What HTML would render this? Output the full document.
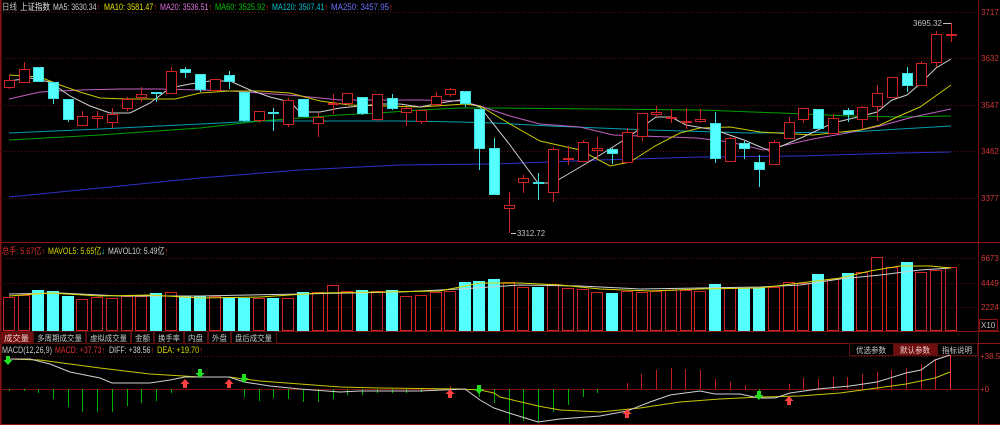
<!DOCTYPE html>
<html><head><meta charset="utf-8"><style>
html,body{margin:0;padding:0;background:#000;width:1000px;height:425px;overflow:hidden}
svg{display:block;font-family:"Liberation Sans","Noto Sans CJK SC",sans-serif;font-size:9px}
</style></head><body>
<svg width="1000" height="425" viewBox="0 0 1000 425" xmlns="http://www.w3.org/2000/svg">
<rect width="1000" height="425" fill="#000"/>
<g stroke="#6e1010" stroke-width="1" fill="none">
<line x1="0.5" y1="0" x2="0.5" y2="425" stroke="#8a1414" stroke-width="2"/>
<line x1="978.5" y1="0" x2="978.5" y2="425"/>
<line x1="0" y1="242.5" x2="1000" y2="242.5" stroke="#8a1414"/>
<line x1="0" y1="331.5" x2="1000" y2="331.5" stroke="#8a1414"/>
<line x1="0" y1="343.5" x2="1000" y2="343.5" stroke="#8a1414"/>
<line x1="0" y1="424.5" x2="1000" y2="424.5" stroke="#8a1414"/>
<line x1="0" y1="389.5" x2="978" y2="389.5" stroke="#7a1010"/>
</g>
<g stroke="#5a1010" stroke-dasharray="1,2" stroke-width="1">
<line x1="0" y1="12.5" x2="978" y2="12.5"/>
<line x1="0" y1="58.5" x2="978" y2="58.5"/>
<line x1="0" y1="105.5" x2="978" y2="105.5"/>
<line x1="0" y1="151.5" x2="978" y2="151.5"/>
<line x1="0" y1="198.5" x2="978" y2="198.5"/>
<line x1="0" y1="258.5" x2="978" y2="258.5"/>
<line x1="0" y1="283.5" x2="978" y2="283.5"/>
<line x1="0" y1="307.5" x2="978" y2="307.5"/>
<line x1="0" y1="356.5" x2="978" y2="356.5"/>
</g>
<!-- header -->
<g lengthAdjust="spacingAndGlyphs">
<text x="2" y="10" fill="#c0c0c0" textLength="15" lengthAdjust="spacingAndGlyphs">日线</text>
<text x="20" y="10" fill="#e0e0e0" textLength="30" lengthAdjust="spacingAndGlyphs">上证指数</text>
<text x="53" y="10" fill="#d0d0d0" textLength="47" lengthAdjust="spacingAndGlyphs">MA5: 3630.34<tspan fill="#e02020">↑</tspan></text>
<text x="104" y="10" fill="#e0e000" textLength="53" lengthAdjust="spacingAndGlyphs">MA10: 3581.47<tspan fill="#e02020">↑</tspan></text>
<text x="160" y="10" fill="#e070e0" textLength="52" lengthAdjust="spacingAndGlyphs">MA20: 3536.51<tspan fill="#e02020">↑</tspan></text>
<text x="215" y="10" fill="#00c000" textLength="54" lengthAdjust="spacingAndGlyphs">MA60: 3525.92<tspan fill="#e02020">↑</tspan></text>
<text x="272" y="10" fill="#00c0d0" textLength="56" lengthAdjust="spacingAndGlyphs">MA120: 3507.41<tspan fill="#e02020">↑</tspan></text>
<text x="331" y="10" fill="#7070ff" textLength="62" lengthAdjust="spacingAndGlyphs">MA250: 3457.95<tspan fill="#e02020">↑</tspan></text>
</g>
<g fill="#d03838" font-size="8">
<text x="981" y="15">3717</text><text x="981" y="61">3632</text><text x="981" y="108">3547</text><text x="981" y="154">3462</text><text x="981" y="201">3377</text>
<text x="981" y="261">6673</text><text x="981" y="286">4449</text><text x="981" y="310">2224</text>
<text x="980" y="359">+38.56</text><text x="980" y="392">+0</text>
</g>
<rect x="979.5" y="319.5" width="18" height="11" fill="none" stroke="#8a1414"/>
<text x="981" y="328" fill="#c0c0c0" font-size="8">X10</text>
<g fill="none" stroke-width="1">
<polyline stroke="#3030c8" points="9,197 100,188 200,178 300,170 400,165 494,164 600,160 700,157 800,156 900,153 951,152"/>
<polyline stroke="#00a0b0" points="9,133 100,129 200,124 260,121 400,121 460,122 494,123 550,126 650,130 750,133 850,132 951,126"/>
<polyline stroke="#00a000" points="9,140 100,135 200,128 260,121 300,118 340,115 380,113 420,110 460,108 494,108 600,109 700,110 780,113 850,116 900,117 951,116"/>
<polyline stroke="#c060c0" points="9,99 40,92 80,90 120,89 160,89 200,90 230,91 260,93 300,96 340,100 420,100 460,101 480,106 510,116 540,124 580,127 613,135 697,138 730,142 763,150 813,139 847,133 880,126 913,117 951,109"/>
<polyline stroke="#c8c800" points="9,75 40,77 60,85 80,92 100,98 125,99 175,99 200,93 229,91 260,91 290,93 320,101 350,105 420,107 465,104 480,106 510,124 540,141 580,150 610,166 630,162 655,146 680,133 700,128 730,127 760,132 813,135 860,130 880,125 897,117 920,107 951,85"/>
<polyline stroke="#d0d0d0" points="9,81 30,78 50,82 70,96 90,106 110,113 130,113 150,103 170,88 190,84 210,81 230,81 250,90 270,97 290,102 300,112 320,112 340,108 380,104 400,104 420,107 440,103 460,100 480,107 510,145 538,183 553,183 570,173 597,157 627,138 656,117 671,117 686,125 715,130 744,140 770,151 803,137 833,123 862,116 877,112 892,100 907,95 921,83 936,68 951,59"/>
</g>
<g stroke-width="1" shape-rendering="crispEdges">
<g stroke="#d02424" fill="#000">
<line x1="9.5" y1="75" x2="9.5" y2="89"/><rect x="4.5" y="80.5" width="10" height="7"/>
<line x1="24.5" y1="62" x2="24.5" y2="83"/><rect x="19.5" y="69.5" width="10" height="13"/>
<line x1="82.5" y1="111" x2="82.5" y2="126"/><rect x="77.5" y="116.5" width="10" height="9"/>
<line x1="97.5" y1="111" x2="97.5" y2="128"/><rect x="92.5" y="116.5" width="10" height="2"/>
<line x1="112.5" y1="108" x2="112.5" y2="128"/><rect x="107.5" y="114.5" width="10" height="8"/>
<line x1="127.5" y1="97" x2="127.5" y2="111"/><rect x="122.5" y="99.5" width="10" height="9"/>
<line x1="141.5" y1="87" x2="141.5" y2="102"/><rect x="136.5" y="94.5" width="10" height="3"/>
<line x1="171.5" y1="67" x2="171.5" y2="94"/><rect x="166.5" y="71.5" width="10" height="22"/>
<line x1="215.5" y1="79" x2="215.5" y2="92"/><rect x="210.5" y="79.5" width="10" height="11"/>
<line x1="259.5" y1="111" x2="259.5" y2="123"/><rect x="254.5" y="111.5" width="10" height="9"/>
<line x1="288.5" y1="98" x2="288.5" y2="127"/><rect x="283.5" y="100.5" width="10" height="24"/>
<line x1="318.5" y1="113" x2="318.5" y2="137"/><rect x="313.5" y="117.5" width="10" height="6"/>
<line x1="333.5" y1="94" x2="333.5" y2="114"/><rect x="328.5" y="103.5" width="10" height="1"/>
<line x1="347.5" y1="93" x2="347.5" y2="105"/><rect x="342.5" y="93.5" width="10" height="10"/>
<line x1="377.5" y1="94" x2="377.5" y2="121"/><rect x="372.5" y="94.5" width="10" height="25"/>
<line x1="406.5" y1="107" x2="406.5" y2="126"/><rect x="401.5" y="108.5" width="10" height="4"/>
<line x1="421.5" y1="110" x2="421.5" y2="124"/><rect x="416.5" y="110.5" width="10" height="11"/>
<line x1="436.5" y1="92" x2="436.5" y2="105"/><rect x="431.5" y="96.5" width="10" height="8"/>
<line x1="450.5" y1="88" x2="450.5" y2="97"/><rect x="445.5" y="89.5" width="10" height="5"/>
<line x1="509.5" y1="192" x2="509.5" y2="233"/><rect x="504.5" y="205.5" width="10" height="3"/>
<line x1="523.5" y1="175" x2="523.5" y2="193"/><rect x="518.5" y="178.5" width="10" height="4"/>
<line x1="553.5" y1="147" x2="553.5" y2="202"/><rect x="548.5" y="149.5" width="10" height="43"/>
<line x1="568.5" y1="146" x2="568.5" y2="165"/><rect x="563.5" y="158.5" width="10" height="1"/>
<line x1="583.5" y1="140" x2="583.5" y2="162"/><rect x="578.5" y="142.5" width="10" height="19"/>
<line x1="597.5" y1="137" x2="597.5" y2="159"/><rect x="592.5" y="148.5" width="10" height="2"/>
<line x1="627.5" y1="128" x2="627.5" y2="163"/><rect x="622.5" y="132.5" width="10" height="30"/>
<line x1="642.5" y1="113" x2="642.5" y2="141"/><rect x="637.5" y="113.5" width="10" height="23"/>
<line x1="656.5" y1="106" x2="656.5" y2="117"/><rect x="651.5" y="112.5" width="10" height="2"/>
<line x1="671.5" y1="109" x2="671.5" y2="123"/><rect x="666.5" y="117.5" width="10" height="1"/>
<line x1="686.5" y1="108" x2="686.5" y2="129"/><rect x="681.5" y="121.5" width="10" height="1"/>
<line x1="700.5" y1="109" x2="700.5" y2="123"/><rect x="695.5" y="119.5" width="10" height="2"/>
<line x1="730.5" y1="137" x2="730.5" y2="162"/><rect x="725.5" y="138.5" width="10" height="23"/>
<line x1="774.5" y1="140" x2="774.5" y2="165"/><rect x="769.5" y="142.5" width="10" height="22"/>
<line x1="789.5" y1="117" x2="789.5" y2="139"/><rect x="784.5" y="122.5" width="10" height="16"/>
<line x1="803.5" y1="108" x2="803.5" y2="123"/><rect x="798.5" y="108.5" width="10" height="11"/>
<line x1="833.5" y1="114" x2="833.5" y2="133"/><rect x="828.5" y="118.5" width="10" height="15"/>
<line x1="862.5" y1="106" x2="862.5" y2="129"/><rect x="857.5" y="107.5" width="10" height="12"/>
<line x1="877.5" y1="85" x2="877.5" y2="121"/><rect x="872.5" y="93.5" width="10" height="13"/>
<line x1="892.5" y1="77" x2="892.5" y2="98"/><rect x="887.5" y="77.5" width="10" height="20"/>
<line x1="921.5" y1="61" x2="921.5" y2="85"/><rect x="916.5" y="63.5" width="10" height="22"/>
<line x1="936.5" y1="31" x2="936.5" y2="67"/><rect x="931.5" y="34.5" width="10" height="28"/>
<line x1="951.5" y1="23" x2="951.5" y2="42"/><rect x="946.5" y="34.5" width="10" height="1"/>
</g>
<g stroke="#40e0e0" fill="#54ffff">
<rect x="33.5" y="67.5" width="10" height="14"/>
<line x1="53.5" y1="82" x2="53.5" y2="104"/><rect x="48.5" y="82.5" width="10" height="16"/>
<line x1="68.5" y1="99" x2="68.5" y2="122"/><rect x="63.5" y="99.5" width="10" height="20"/>
<line x1="156.5" y1="92" x2="156.5" y2="102"/><rect x="151.5" y="92.5" width="10" height="1"/>
<line x1="185.5" y1="67" x2="185.5" y2="78"/><rect x="180.5" y="69.5" width="10" height="3"/>
<line x1="200.5" y1="74" x2="200.5" y2="92"/><rect x="195.5" y="74.5" width="10" height="15"/>
<line x1="229.5" y1="71" x2="229.5" y2="89"/><rect x="224.5" y="75.5" width="10" height="6"/>
<line x1="244.5" y1="92" x2="244.5" y2="122"/><rect x="239.5" y="92.5" width="10" height="28"/>
<line x1="273.5" y1="108" x2="273.5" y2="131"/><rect x="268.5" y="112.5" width="10" height="1"/>
<line x1="303.5" y1="99" x2="303.5" y2="117"/><rect x="298.5" y="99.5" width="10" height="17"/>
<line x1="362.5" y1="97" x2="362.5" y2="115"/><rect x="357.5" y="97.5" width="10" height="16"/>
<line x1="392.5" y1="94" x2="392.5" y2="110"/><rect x="387.5" y="98.5" width="10" height="10"/>
<line x1="465.5" y1="91" x2="465.5" y2="107"/><rect x="460.5" y="91.5" width="10" height="12"/>
<line x1="479.5" y1="109" x2="479.5" y2="170"/><rect x="474.5" y="109.5" width="10" height="39"/>
<line x1="494.5" y1="138" x2="494.5" y2="194"/><rect x="489.5" y="148.5" width="10" height="46"/>
<line x1="538.5" y1="173" x2="538.5" y2="200"/><rect x="533.5" y="182.5" width="10" height="1"/>
<line x1="612.5" y1="148" x2="612.5" y2="164"/><rect x="607.5" y="149.5" width="10" height="4"/>
<line x1="715.5" y1="112" x2="715.5" y2="163"/><rect x="710.5" y="123.5" width="10" height="35"/>
<line x1="744.5" y1="141" x2="744.5" y2="159"/><rect x="739.5" y="143.5" width="10" height="5"/>
<line x1="759.5" y1="155" x2="759.5" y2="187"/><rect x="754.5" y="162.5" width="10" height="7"/>
<line x1="818.5" y1="109" x2="818.5" y2="130"/><rect x="813.5" y="109.5" width="10" height="19"/>
<line x1="848.5" y1="108" x2="848.5" y2="122"/><rect x="843.5" y="110.5" width="10" height="4"/>
<line x1="907.5" y1="67" x2="907.5" y2="92"/><rect x="902.5" y="73.5" width="10" height="12"/>
</g>
</g>
<line x1="511" y1="233.5" x2="516" y2="233.5" stroke="#c0c0c0"/>
<text x="517" y="236" fill="#c0c0c0" font-size="8" textLength="28" lengthAdjust="spacingAndGlyphs">3312.72</text>
<text x="913" y="26" fill="#c0c0c0" font-size="8" textLength="29" lengthAdjust="spacingAndGlyphs">3695.32</text>
<line x1="943" y1="23.5" x2="951" y2="23.5" stroke="#c0c0c0"/>
<!-- volume header -->
<text x="2" y="254" fill="#e03030" textLength="43" lengthAdjust="spacingAndGlyphs">总手: 5.67亿↑</text>
<text x="48" y="254" fill="#d8d800" textLength="57" lengthAdjust="spacingAndGlyphs">MAVOL5: 5.65亿<tspan fill="#40e0e0">↓</tspan></text>
<text x="108" y="254" fill="#d0d0d0" textLength="60" lengthAdjust="spacingAndGlyphs">MAVOL10: 5.49亿<tspan fill="#e03030">↑</tspan></text>
<g shape-rendering="crispEdges">
<g stroke="#d02424" fill="none">
<rect x="3.5" y="297.5" width="11" height="33"/>
<rect x="18.5" y="295.5" width="11" height="35"/>
<rect x="76.5" y="299.5" width="11" height="31"/>
<rect x="91.5" y="297.5" width="11" height="33"/>
<rect x="106.5" y="298.5" width="11" height="32"/>
<rect x="121.5" y="296.5" width="11" height="34"/>
<rect x="135.5" y="296.5" width="11" height="34"/>
<rect x="165.5" y="292.5" width="11" height="38"/>
<rect x="209.5" y="296.5" width="11" height="34"/>
<rect x="253.5" y="298.5" width="11" height="32"/>
<rect x="282.5" y="298.5" width="11" height="32"/>
<rect x="312.5" y="292.5" width="11" height="38"/>
<rect x="327.5" y="285.5" width="11" height="45"/>
<rect x="341.5" y="291.5" width="11" height="39"/>
<rect x="371.5" y="291.5" width="11" height="39"/>
<rect x="400.5" y="296.5" width="11" height="34"/>
<rect x="415.5" y="295.5" width="11" height="35"/>
<rect x="430.5" y="292.5" width="11" height="38"/>
<rect x="444.5" y="291.5" width="11" height="39"/>
<rect x="503.5" y="282.5" width="11" height="48"/>
<rect x="517.5" y="287.5" width="11" height="43"/>
<rect x="547.5" y="284.5" width="11" height="46"/>
<rect x="562.5" y="288.5" width="11" height="42"/>
<rect x="577.5" y="289.5" width="11" height="41"/>
<rect x="591.5" y="292.5" width="11" height="38"/>
<rect x="621.5" y="291.5" width="11" height="39"/>
<rect x="636.5" y="292.5" width="11" height="38"/>
<rect x="650.5" y="291.5" width="11" height="39"/>
<rect x="665.5" y="290.5" width="11" height="40"/>
<rect x="680.5" y="290.5" width="11" height="40"/>
<rect x="694.5" y="291.5" width="11" height="39"/>
<rect x="724.5" y="288.5" width="11" height="42"/>
<rect x="768.5" y="287.5" width="11" height="43"/>
<rect x="783.5" y="282.5" width="11" height="48"/>
<rect x="797.5" y="283.5" width="11" height="47"/>
<rect x="827.5" y="279.5" width="11" height="51"/>
<rect x="856.5" y="272.5" width="11" height="58"/>
<rect x="871.5" y="257.5" width="11" height="73"/>
<rect x="886.5" y="267.5" width="11" height="63"/>
<rect x="915.5" y="272.5" width="11" height="58"/>
<rect x="930.5" y="270.5" width="11" height="60"/>
<rect x="945.5" y="267.5" width="11" height="63"/>
</g>
<g fill="#54ffff">
<rect x="32" y="290" width="12" height="41"/>
<rect x="47" y="291" width="12" height="40"/>
<rect x="62" y="296" width="12" height="35"/>
<rect x="150" y="293" width="12" height="38"/>
<rect x="179" y="296" width="12" height="35"/>
<rect x="194" y="296" width="12" height="35"/>
<rect x="223" y="298" width="12" height="33"/>
<rect x="238" y="298" width="12" height="33"/>
<rect x="267" y="298" width="12" height="33"/>
<rect x="297" y="292" width="12" height="39"/>
<rect x="356" y="290" width="12" height="41"/>
<rect x="386" y="290" width="12" height="41"/>
<rect x="459" y="282" width="12" height="49"/>
<rect x="473" y="281" width="12" height="50"/>
<rect x="488" y="279" width="12" height="52"/>
<rect x="532" y="287" width="12" height="44"/>
<rect x="606" y="293" width="12" height="38"/>
<rect x="709" y="284" width="12" height="47"/>
<rect x="738" y="288" width="12" height="43"/>
<rect x="753" y="288" width="12" height="43"/>
<rect x="812" y="274" width="12" height="57"/>
<rect x="842" y="273" width="12" height="58"/>
<rect x="901" y="262" width="12" height="69"/>
</g>
</g>
<g fill="none">
<polyline stroke="#d0d0d0" points="9,294 60,293 120,296 200,296 300,294 400,292 460,289 520,285 580,286 640,289 700,288 760,287 800,285 840,279 880,275 920,270 951,268"/>
<polyline stroke="#d8d800" points="9,296 50,293 100,296 150,295 200,298 260,297 320,293 380,292 440,291 480,283 520,283 560,285 600,289 650,291 700,289 760,288 800,283 840,278 870,271 900,266 930,266 951,268"/>
</g>
<g stroke="#5a1010" fill="#000">
<rect x="0.5" y="331.5" width="32" height="12" fill="#6e0e0e"/>
<rect x="33.5" y="331.5" width="52" height="12"/>
<rect x="86.5" y="331.5" width="44" height="12"/>
<rect x="131.5" y="331.5" width="22" height="12"/>
<rect x="154.5" y="331.5" width="29" height="12"/>
<rect x="184.5" y="331.5" width="23" height="12"/>
<rect x="208.5" y="331.5" width="22" height="12"/>
<rect x="231.5" y="331.5" width="45" height="12"/>
</g>
<g fill="#c8c8c8" font-size="8">
<text x="4" y="341" fill="#f0d0d0" textLength="25" lengthAdjust="spacingAndGlyphs">成交量</text>
<text x="37" y="341" textLength="45" lengthAdjust="spacingAndGlyphs">多周期成交量</text>
<text x="90" y="341" textLength="37" lengthAdjust="spacingAndGlyphs">虚拟成交量</text>
<text x="135" y="341" textLength="15" lengthAdjust="spacingAndGlyphs">金额</text>
<text x="158" y="341" textLength="22" lengthAdjust="spacingAndGlyphs">换手率</text>
<text x="188" y="341" textLength="15" lengthAdjust="spacingAndGlyphs">内盘</text>
<text x="212" y="341" textLength="15" lengthAdjust="spacingAndGlyphs">外盘</text>
<text x="235" y="341" textLength="37" lengthAdjust="spacingAndGlyphs">盘后成交量</text>
</g>
<text x="2" y="353" fill="#c8c8c8" textLength="50" lengthAdjust="spacingAndGlyphs">MACD(12,26,9)</text>
<text x="55" y="353" fill="#e03030" textLength="50" lengthAdjust="spacingAndGlyphs">MACD: +37.73↑</text>
<text x="109" y="353" fill="#d0d0d0" textLength="45" lengthAdjust="spacingAndGlyphs">DIFF: +38.56<tspan fill="#e03030">↑</tspan></text>
<text x="157" y="353" fill="#d8d800" textLength="46" lengthAdjust="spacingAndGlyphs">DEA: +19.70<tspan fill="#e03030">↑</tspan></text>
<g stroke="#5a1010">
<rect x="849.5" y="343.5" width="44" height="12" fill="#000"/>
<rect x="893.5" y="343.5" width="44" height="12" fill="#6e0e0e"/>
<rect x="937.5" y="343.5" width="40" height="12" fill="#000"/>
</g>
<g fill="#c8c8c8" font-size="8"><text x="856" y="353" textLength="30" lengthAdjust="spacingAndGlyphs">优选参数</text><text x="900" y="353" fill="#f0d0d0" textLength="30" lengthAdjust="spacingAndGlyphs">默认参数</text><text x="942" y="353" textLength="30" lengthAdjust="spacingAndGlyphs">指标说明</text></g>
<g stroke="#00b000" stroke-width="1">
<line x1="9.5" y1="389" x2="9.5" y2="391"/><line x1="24.5" y1="389" x2="24.5" y2="391"/><line x1="38.5" y1="389" x2="38.5" y2="393"/>
<line x1="53.5" y1="389" x2="53.5" y2="399"/><line x1="68.5" y1="389" x2="68.5" y2="407"/><line x1="82.5" y1="389" x2="82.5" y2="412"/>
<line x1="97.5" y1="389" x2="97.5" y2="412"/><line x1="112.5" y1="389" x2="112.5" y2="412"/><line x1="127.5" y1="389" x2="127.5" y2="406"/>
<line x1="141.5" y1="389" x2="141.5" y2="403"/><line x1="156.5" y1="389" x2="156.5" y2="401"/><line x1="171.5" y1="389" x2="171.5" y2="393"/>
<line x1="244.5" y1="389" x2="244.5" y2="397"/><line x1="259.5" y1="389" x2="259.5" y2="401"/><line x1="273.5" y1="389" x2="273.5" y2="398"/>
<line x1="288.5" y1="389" x2="288.5" y2="399"/><line x1="303.5" y1="389" x2="303.5" y2="402"/><line x1="318.5" y1="389" x2="318.5" y2="402"/>
<line x1="333.5" y1="389" x2="333.5" y2="399"/><line x1="347.5" y1="389" x2="347.5" y2="395"/><line x1="362.5" y1="389" x2="362.5" y2="395"/>
<line x1="377.5" y1="389" x2="377.5" y2="393"/><line x1="392.5" y1="389" x2="392.5" y2="393"/><line x1="406.5" y1="389" x2="406.5" y2="393"/>
<line x1="421.5" y1="389" x2="421.5" y2="392"/><line x1="436.5" y1="389" x2="436.5" y2="391"/>
<line x1="479.5" y1="389" x2="479.5" y2="397"/><line x1="494.5" y1="389" x2="494.5" y2="403"/><line x1="509.5" y1="389" x2="509.5" y2="423"/>
<line x1="523.5" y1="389" x2="523.5" y2="421"/><line x1="538.5" y1="389" x2="538.5" y2="422"/><line x1="553.5" y1="389" x2="553.5" y2="412"/>
<line x1="568.5" y1="389" x2="568.5" y2="405"/><line x1="583.5" y1="389" x2="583.5" y2="397"/><line x1="597.5" y1="389" x2="597.5" y2="393"/>
<line x1="759.5" y1="389" x2="759.5" y2="392"/>
</g>
<g stroke="#c02020" stroke-width="1">
<line x1="450.5" y1="389" x2="450.5" y2="386"/>
<line x1="627.5" y1="389" x2="627.5" y2="383"/><line x1="641.5" y1="389" x2="641.5" y2="374"/><line x1="656.5" y1="389" x2="656.5" y2="370"/>
<line x1="671.5" y1="389" x2="671.5" y2="368"/><line x1="685.5" y1="389" x2="685.5" y2="369"/><line x1="700.5" y1="389" x2="700.5" y2="370"/>
<line x1="715.5" y1="389" x2="715.5" y2="379"/><line x1="730.5" y1="389" x2="730.5" y2="382"/><line x1="745.5" y1="389" x2="745.5" y2="385"/>
<line x1="789.5" y1="389" x2="789.5" y2="384"/><line x1="803.5" y1="389" x2="803.5" y2="378"/><line x1="818.5" y1="389" x2="818.5" y2="379"/>
<line x1="833.5" y1="389" x2="833.5" y2="377"/><line x1="847.5" y1="389" x2="847.5" y2="377"/><line x1="862.5" y1="389" x2="862.5" y2="374"/>
<line x1="877.5" y1="389" x2="877.5" y2="372"/><line x1="891.5" y1="389" x2="891.5" y2="370"/><line x1="906.5" y1="389" x2="906.5" y2="368"/>
<line x1="921.5" y1="389" x2="921.5" y2="364"/><line x1="935.5" y1="389" x2="935.5" y2="359"/><line x1="950.5" y1="389" x2="950.5" y2="355" stroke="#ff3030"/>
</g>
<g fill="none">
<polyline stroke="#c8c800" points="9,359 40,360 70,364 100,368 150,374 200,377 229,377 260,381 300,384 340,387 380,388 460,389 480,390 494,393 500,397 538,406 560,410 600,412 640,408 680,402 720,399 760,397 800,396 840,393 877,388 906,384 935,378 950,372"/>
<polyline stroke="#d0d0d0" points="9,359 30,359 50,364 70,372 100,378 112,383 150,383 170,380 185,377 229,377 244,382 270,386 300,389 340,392 360,391 420,391 465,389 480,400 494,408 509,413 538,422 560,419 600,416 627,411 650,402 670,395 700,391 715,394 740,394 759,398 775,398 790,393 818,389 850,386 877,382 906,373 921,370 935,360 950,355"/>
</g>
<g fill="#20e020">
<path d="M6,356h4v4h2.5l-4.5,5l-4.5,-5h2.5z"/>
<path d="M198,369h4v4h2.5l-4.5,5l-4.5,-5h2.5z"/>
<path d="M242,374h4v4h2.5l-4.5,5l-4.5,-5h2.5z"/>
<path d="M477,385h4v4h2.5l-4.5,5l-4.5,-5h2.5z"/>
<path d="M757,391h4v4h2.5l-4.5,5l-4.5,-5h2.5z"/>
</g>
<g fill="#ff4040">
<path d="M183,388h4v-4h2.5l-4.5,-5l-4.5,5h2.5z"/>
<path d="M227,388h4v-4h2.5l-4.5,-5l-4.5,5h2.5z"/>
<path d="M448,398h4v-4h2.5l-4.5,-5l-4.5,5h2.5z"/>
<path d="M625,418h4v-4h2.5l-4.5,-5l-4.5,5h2.5z"/>
<path d="M787,405h4v-4h2.5l-4.5,-5l-4.5,5h2.5z"/>
</g>
</svg>
</body></html>
